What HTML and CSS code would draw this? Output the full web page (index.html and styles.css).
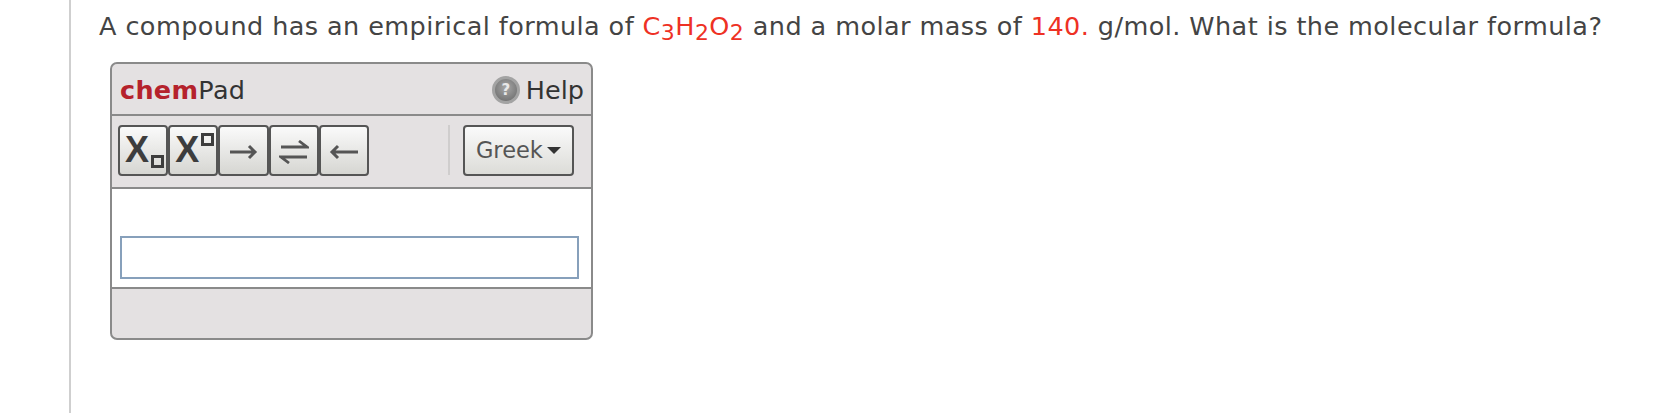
FILE: index.html
```html
<!DOCTYPE html>
<html lang="en">
<head>
<meta charset="utf-8">
<title>chemPad question</title>
<link rel="stylesheet" href="styles.css">
</head>
<body>
<main class="content">
  <p class="question">A compound has an empirical formula of <span class="given">C<sub>3</sub>H<sub>2</sub>O<sub>2</sub></span> and a molar mass of <span class="given">140.</span> g/mol. What is the molecular formula?</p>
  <section class="pad">
    <header class="pad-head">
      <div class="brand"><b>chem</b>Pad</div>
      <div class="help">
        <span class="help-icon">?</span>
        <span>Help</span>
      </div>
    </header>
    <div class="toolbar">
      <div class="tools">
        <button class="tool"><span class="big-x">X</span><span class="box box-sub"></span></button>
        <button class="tool"><span class="big-x">X</span><span class="box box-sup"></span></button>
        <button class="tool"><svg class="arrow" width="30" height="20" viewBox="0 0 30 20"><path d="M2 10H27M21 4l6 6-6 6" fill="none" stroke="#555" stroke-width="3"/></svg></button>
        <button class="tool"><svg class="arrow" width="30" height="24" viewBox="0 0 30 24"><path d="M2 7H28L20 1M28 17H2L10 23" fill="none" stroke="#555" stroke-width="2.800"/></svg></button>
        <button class="tool"><svg class="arrow" width="30" height="20" viewBox="0 0 30 20"><path d="M29 10H3M9 4l-6 6 6 6" fill="none" stroke="#555" stroke-width="3"/></svg></button>
      </div>
      <div class="divider"></div>
      <button class="greek">Greek<span class="caret"></span></button>
    </div>
    <div class="editor"><input class="entry" type="text" aria-label="Answer"></div>
    <div class="pad-foot"></div>
  </section>
</main>
</body>
</html>
```
FILE: styles.css
```css
* { box-sizing: border-box; }
html, body { margin: 0; height: 100%; background: #fff; }
body { font-family: "DejaVu Sans", sans-serif; overflow: hidden; }
.content {
  margin-left: 69px;
  height: 413px;
  border-left: 2px solid #cfcfcf;
  padding: 8px 0 0 28px;
}
.question {
  margin: 0;
  font-size: 25.500px;
  letter-spacing: .43px;
  line-height: 36px;
  color: #444;
  white-space: nowrap;
}
.given { color: #ee3124; }
.given sub { font-size: 22px; line-height: 0; vertical-align: -5px; }
.pad {
  width: 483px;
  height: 278px;
  margin: 18px 0 0 11px;
  border: 2px solid #8a8a8a;
  border-radius: 7px;
  background: #e4e1e2;
  display: flex;
  flex-direction: column;
}
.pad-head {
  height: 50px;
  flex: none;
  display: flex;
  justify-content: space-between;
  align-items: center;
  padding: 2px 7px 0 8px;
  font-size: 25.500px;
  color: #333;
}
.brand { letter-spacing: .3px; }
.brand b { color: #b5222c; }
.help { display: flex; align-items: center; gap: 6px; }
.help-icon {
  width: 28px;
  height: 28px;
  border-radius: 50%;
  border: 3px solid #a3a3a3;
  background: radial-gradient(circle at 50% 40%, #a8a8a8, #666);
  color: #e8e8e8;
  font-size: 15px;
  font-weight: bold;
  display: flex;
  align-items: center;
  justify-content: center;
}
.toolbar {
  height: 75px;
  flex: none;
  border-top: 2px solid #8a8a8a;
  border-bottom: 2px solid #8a8a8a;
  display: flex;
  align-items: center;
  padding: 0 0 3px 6px;
}
.tools { display: flex; }
.tool {
  width: 50.200px;
  height: 51px;
  padding: 0;
  border: 2px solid #555;
  border-radius: 4px;
  background: linear-gradient(#fafafa, #d6d6d2);
  display: flex;
  align-items: center;
  justify-content: center;
  position: relative;
}
.arrow { margin-top: 3px; }
.big-x {
  font: bold 36px/1 "Liberation Sans", sans-serif;
  color: #3d3d3d;
}
.tool:nth-child(1) .big-x { margin-right: 12px; }
.tool:nth-child(2) .big-x { margin-right: 12px; }
.box {
  position: absolute;
  width: 13px;
  height: 13px;
  border: 3px solid #3d3d3d;
}
.box-sub { right: 2px; bottom: 6px; }
.box-sup { right: 2px; top: 6px; }
.divider {
  width: 2px;
  height: 50px;
  margin-left: 79px;
  background: #cfcdcd;
}
.greek {
  width: 111px;
  height: 51px;
  margin-left: 13px;
  padding: 0 0 0 11px;
  border: 2px solid #555;
  border-radius: 4px;
  background: linear-gradient(#fafafa, #dcdcd8);
  font: 22.500px "DejaVu Sans", sans-serif;
  color: #555;
  display: flex;
  align-items: center;
}
.caret {
  margin-left: 4px;
  border-left: 7.500px solid transparent;
  border-right: 7.500px solid transparent;
  border-top: 7px solid #333;
}
.editor {
  height: 100px;
  flex: none;
  background: #fff;
  padding: 47px 0 0 8px;
  border-bottom: 2px solid #8a8a8a;
}
.entry {
  display: block;
  width: 459px;
  height: 43px;
  border: 2px solid #87a0bb;
  background: #fff;
  outline: none;
}
.pad-foot { flex: 1; }
```
